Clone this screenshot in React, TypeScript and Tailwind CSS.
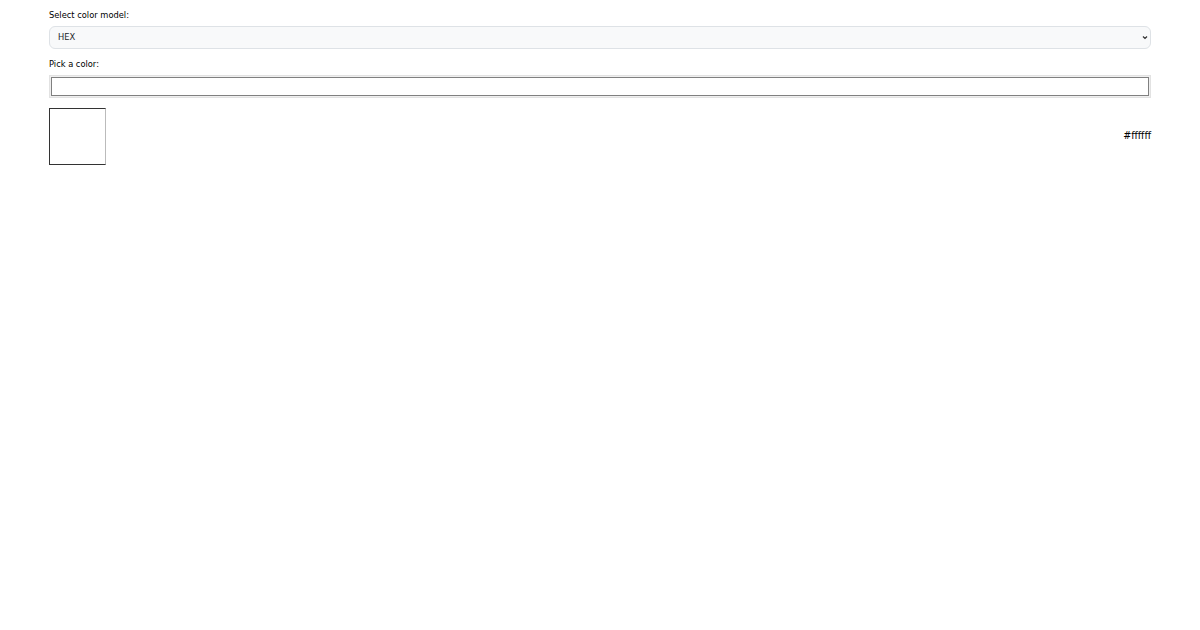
import React, { useState } from 'react';

export default function App() {
    const [model, setModel] = useState('HEX');
    const [color, setColor] = useState('#ffffff');

    return (
        <div className="w-[1200px] h-[630px] bg-white px-[49px] pt-[9px] text-black" style={{ fontFamily: '"DejaVu Sans", sans-serif' }}>
            <label className="block text-[8.3px] leading-[12px] mb-[5px]">Select color model:</label>
            <div className="relative">
                <select
                    value={model}
                    onChange={e => setModel(e.target.value)}
                    className="block w-full h-[23px] pl-[8px] pr-[16px] text-[8.3px] bg-[#f8f9fa] border border-[#dee2e6] rounded-[6px] text-[#212529] appearance-none"
                >
                    <option>HEX</option>
                    <option>RGB</option>
                    <option>HSL</option>
                </select>
                <svg className="absolute right-[3px] top-[9px] pointer-events-none" width="6" height="5" viewBox="0 0 6 5">
                    <path d="M1 1.5 L3 3.5 L5 1.5" fill="none" stroke="#333" strokeWidth="1.2" />
                </svg>
            </div>
            <label className="block text-[8.3px] leading-[12px] mt-[9px] mb-[5px]">Pick a color:</label>
            <div className="h-[23px] border border-[#e2e2e2] bg-[#efefef] p-px">
                <div className="h-full border border-[#808080]" style={{ backgroundColor: color }} onClick={() => setColor('#ffffff')} />
            </div>
            <div className="flex items-center justify-between mt-[10px]">
                <div className="w-[56.5px] h-[57px] border border-[#333] border-r-[#bbb]" style={{ backgroundColor: color }} />
                <span className="text-[9.6px]">{color}</span>
            </div>
        </div>
    );
}
